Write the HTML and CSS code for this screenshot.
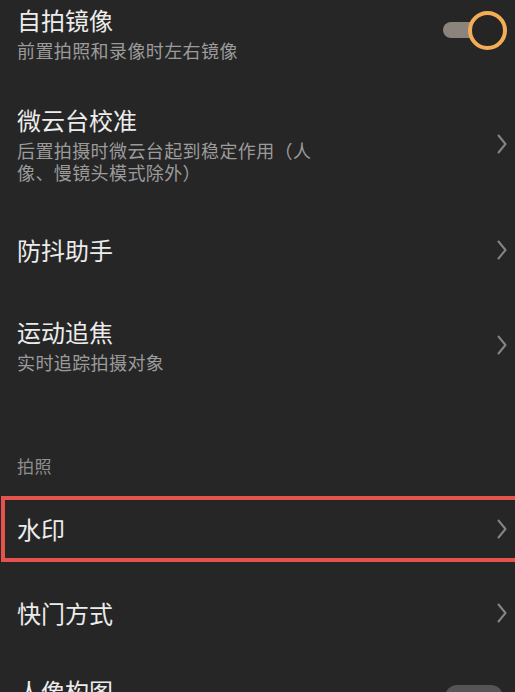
FILE: index.html
```html
<!DOCTYPE html>
<html lang="zh-CN">
<head>
<meta charset="utf-8">
<title>设置</title>
<link rel="stylesheet" href="styles.css">
</head>
<body>
<div class="settings">
  <div class="item item-first">
    <div class="text">
      <div class="title">自拍镜像</div>
      <div class="sub">前置拍照和录像时左右镜像</div>
    </div>
    <div class="switch switch-on"><span class="track"></span><span class="knob"></span></div>
  </div>
  <div class="item">
    <div class="text">
      <div class="title">微云台校准</div>
      <div class="sub sub-wrap">后置拍摄时微云台起到稳定作用（人像、慢镜头模式除外）</div>
    </div>
    <svg class="chev" width="10" height="20" viewBox="0 0 10 20"><polyline points="1.5,1.5 8.5,10 1.5,18.5"/></svg>
  </div>
  <div class="item">
    <div class="text">
      <div class="title">防抖助手</div>
    </div>
    <svg class="chev" width="10" height="20" viewBox="0 0 10 20"><polyline points="1.5,1.5 8.5,10 1.5,18.5"/></svg>
  </div>
  <div class="item">
    <div class="text">
      <div class="title">运动追焦</div>
      <div class="sub">实时追踪拍摄对象</div>
    </div>
    <svg class="chev" width="10" height="20" viewBox="0 0 10 20"><polyline points="1.5,1.5 8.5,10 1.5,18.5"/></svg>
  </div>
  <div class="section">拍照</div>
  <div class="item item-marked">
    <div class="text">
      <div class="title">水印</div>
    </div>
    <svg class="chev" width="10" height="20" viewBox="0 0 10 20"><polyline points="1.5,1.5 8.5,10 1.5,18.5"/></svg>
  </div>
  <div class="item item-tight">
    <div class="text">
      <div class="title">快门方式</div>
    </div>
    <svg class="chev" width="10" height="20" viewBox="0 0 10 20"><polyline points="1.5,1.5 8.5,10 1.5,18.5"/></svg>
  </div>
  <div class="item item-tight">
    <div class="text">
      <div class="title">人像构图</div>
    </div>
    <div class="switch-off"></div>
  </div>
</div>
</body>
</html>
```
FILE: styles.css
```css
html, body {
  margin: 0;
  padding: 0;
  background: #262626;
}
body {
  width: 515px;
  height: 692px;
  overflow: hidden;
  font-family: "Noto Sans CJK SC", "Noto Sans", sans-serif;
}
.settings {
  display: flex;
  flex-direction: column;
}
.item {
  display: flex;
  align-items: center;
  justify-content: space-between;
  padding: 26px 8px 26px 17px;
}
.item-first {
  padding-top: 5px;
  padding-bottom: 18px;
}
.item-tight {
  padding-top: 22px;
  padding-bottom: 22px;
}
.item-marked {
  margin-left: 1px;
  margin-bottom: 14px;
  padding: 14px 8px 14px 12px;
  border: 4px solid #e5534f;
  border-right: 0;
}
.text {
  display: flex;
  flex-direction: column;
}
.title {
  font-size: 24px;
  line-height: 30px;
  color: #ececec;
}
.sub {
  margin-top: 4px;
  font-size: 18px;
  line-height: 22px;
  letter-spacing: 0.4px;
  color: #9b9b9b;
}
.sub-wrap {
  max-width: 300px;
}
.section {
  padding: 55px 0 18px 17px;
  font-size: 17px;
  line-height: 24px;
  letter-spacing: 0.5px;
  color: #8e8e8e;
}
.chev {
  flex: none;
}
.chev polyline {
  fill: none;
  stroke: #858585;
  stroke-width: 2;
  stroke-linecap: round;
  stroke-linejoin: round;
}
.switch {
  position: relative;
  flex: none;
  width: 64px;
  height: 39px;
}
.switch-on {
  margin-bottom: 5px;
}
.track {
  position: absolute;
  left: 0;
  top: 11px;
  width: 44px;
  height: 16px;
  border-radius: 8px;
  background: #8a847d;
}
.knob {
  position: absolute;
  right: 0;
  top: 0;
  width: 39px;
  height: 39px;
  box-sizing: border-box;
  border: 4px solid #f3ad57;
  border-radius: 50%;
  background: #252525;
}
.switch-off {
  flex: none;
  align-self: flex-start;
  margin-top: 13px;
  margin-right: 4px;
  width: 58px;
  height: 24px;
  border-radius: 12px;
  background: #555555;
}
```
